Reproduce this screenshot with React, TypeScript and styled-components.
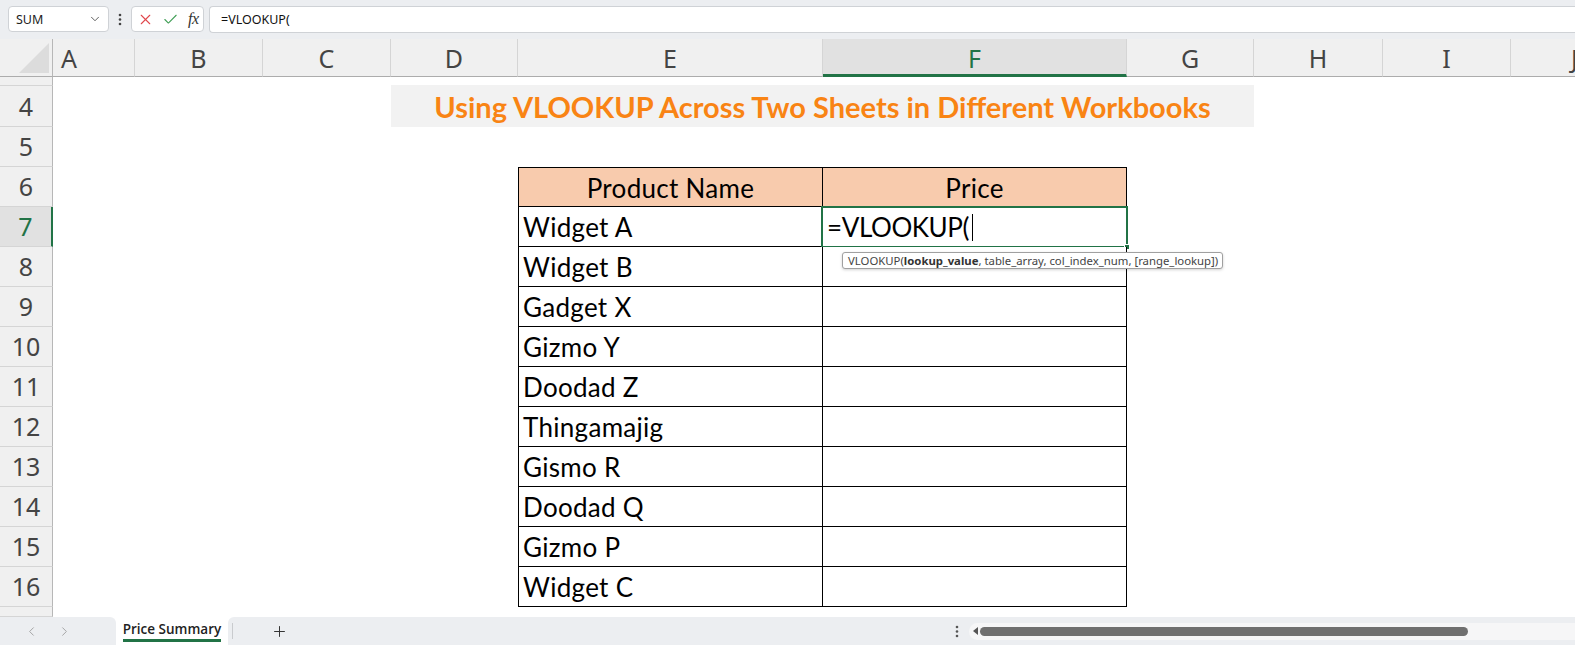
import React from "react";
import styled, { createGlobalStyle, css } from "styled-components";
import { X, Check, ChevronDown, ChevronLeft, ChevronRight, Plus } from "lucide-react";

const GlobalStyle = createGlobalStyle`
  html, body { margin: 0; padding: 0; background: #ffffff; overflow: hidden; }
  body { font-family: "Noto Sans", "Open Sans", sans-serif; }
  * { box-sizing: border-box; }
`;

const GREEN = "#217346";
const HEAD_BG = "#f0f0f0";
const HEAD_ACTIVE = "#e1e1e1";
const CELL_FONT = `"Lato", "Open Sans", sans-serif`;

const Frame = styled.div`
  width: 1575px;
  height: 645px;
  display: flex;
  flex-direction: column;
  overflow: hidden;
  background: #fff;
`;

/* ---------- Formula bar ---------- */
const TopBar = styled.div`
  flex: none;
  height: 39px;
  background: #eceef1;
  display: flex;
  align-items: flex-start;
  padding: 6px 0 0 8px;
`;

const NameBox = styled.div`
  width: 101px;
  height: 26px;
  background: #fff;
  border: 1px solid #cfd2d6;
  border-radius: 4px;
  display: flex;
  align-items: center;
  justify-content: space-between;
  padding: 0 6px 0 7px;
  font-size: 12.5px;
  color: #222;
`;

const VDots = styled.div`
  width: 22px;
  height: 26px;
  display: flex;
  align-items: center;
  justify-content: center;
`;

const IconBox = styled.div`
  width: 73px;
  height: 26px;
  background: #fff;
  border: 1px solid #cfd2d6;
  border-radius: 4px;
  display: flex;
  align-items: center;
  padding: 0 0 0 5px;
  gap: 8px;
`;

const Fx = styled.span`
  font-family: "Liberation Serif", "DejaVu Serif", serif;
  font-style: italic;
  font-size: 16px;
  color: #333;
  margin-left: 1px;
  letter-spacing: -0.5px;
`;

const FormulaInput = styled.div`
  flex: 1;
  margin-left: 5px;
  height: 27px;
  background: #fff;
  border: 1px solid #cfd2d6;
  border-right: none;
  border-radius: 4px 0 0 4px;
  display: flex;
  align-items: center;
  padding-left: 11px;
  font-size: 12.5px;
  color: #111;
`;

/* ---------- Sheet ---------- */
const Sheet = styled.div`
  flex: none;
  display: grid;
  grid-template-columns: 53px 82px 128px 128px 127px 305px 304px 127px 129px 128px 128px;
  grid-template-rows: 38px 9px 41px repeat(12, 40px) 10px;
  width: 1639px;
`;

type Pos = { $row: number; $col: number; $span?: number };

const placed = css<Pos>`
  grid-row: ${(p) => p.$row};
  grid-column: ${(p) => `${p.$col} / span ${p.$span ?? 1}`};
`;

const Corner = styled.div`
  grid-row: 1;
  grid-column: 1;
  background: ${HEAD_BG};
  border-right: 1px solid #b7b7b7;
  border-bottom: 1px solid #acacac;
  display: flex;
  align-items: flex-end;
  justify-content: flex-end;
  padding: 0 3px 3px 0;
`;

const ColHead = styled.div<Pos & { $active?: boolean; $left?: boolean }>`
  ${placed};
  background: ${(p) => (p.$active ? HEAD_ACTIVE : HEAD_BG)};
  border-right: 1px solid #d5d5d5;
  border-bottom: ${(p) => (p.$active ? `3px solid ${GREEN}` : "1px solid #acacac")};
  display: flex;
  align-items: center;
  justify-content: ${(p) => (p.$left ? "flex-start" : "center")};
  padding-left: ${(p) => (p.$left ? "8px" : "0")};
  padding-top: ${(p) => (p.$active ? "2px" : "0")};
  font-size: 25px;
  color: ${(p) => (p.$active ? GREEN : "#444")};
  overflow: hidden;
`;

const RowHead = styled.div<Pos & { $active?: boolean }>`
  ${placed};
  background: ${(p) => (p.$active ? HEAD_ACTIVE : HEAD_BG)};
  border-bottom: 1px solid #d5d5d5;
  border-right: ${(p) => (p.$active ? `2px solid ${GREEN}` : "1px solid #b7b7b7")};
  display: flex;
  align-items: center;
  justify-content: center;
  font-size: 25px;
  color: ${(p) => (p.$active ? GREEN : "#444")};
  overflow: hidden;
  line-height: 1;
`;

const TitleCell = styled.div<Pos>`
  ${placed};
  background: #f2f2f2;
  margin-top: -1px;
  display: flex;
  align-items: center;
  justify-content: center;
  font-family: ${CELL_FONT};
  font-weight: 700;
  font-size: 29px;
  color: #f98414;
  white-space: nowrap;
`;

const TCell = styled.div<Pos & { $head?: boolean; $first?: boolean; $top?: boolean }>`
  ${placed};
  position: relative;
  background: ${(p) => (p.$head ? "#f8cbad" : "#fff")};
  border-right: 1px solid #000;
  border-bottom: 1px solid #000;
  border-left: ${(p) => (p.$first ? "1px solid #000" : "none")};
  border-top: ${(p) => (p.$top ? "1px solid #000" : "none")};
  display: flex;
  align-items: center;
  justify-content: ${(p) => (p.$head ? "center" : "flex-start")};
  padding-left: ${(p) => (p.$head ? "0" : "4px")};
  padding-top: 1px;
  font-family: ${CELL_FONT};
  font-size: 26px;
  letter-spacing: 0.3px;
  color: #000;
  white-space: nowrap;
`;

const FormulaText = styled.span`
  letter-spacing: -0.4px;
`;

const ActiveFrame = styled.div`
  position: absolute;
  left: -2px;
  top: -1px;
  right: -2px;
  bottom: -2px;
  border: 2px solid ${GREEN};
  pointer-events: none;
`;

const FillHandle = styled.div`
  position: absolute;
  right: -4px;
  bottom: -4px;
  width: 6px;
  height: 6px;
  background: ${GREEN};
  border: 1px solid #fff;
`;

const Caret = styled.span`
  display: inline-block;
  width: 1px;
  height: 27px;
  background: #000;
  margin-left: 3px;
`;

const Tooltip = styled.div`
  position: absolute;
  left: 19px;
  top: 45px;
  height: 17px;
  padding: 0 4px 0 5px;
  background: #fff;
  border: 1px solid #a0a0a0;
  border-radius: 3px;
  box-shadow: 0 1px 3px rgba(0, 0, 0, 0.18);
  font-family: "Noto Sans", "Open Sans", sans-serif;
  font-size: 11.35px;
  letter-spacing: 0;
  line-height: 15px;
  color: #444;
  white-space: nowrap;
  z-index: 2;
  b { font-weight: 700; color: #333; }
`;

/* ---------- Tab bar ---------- */
const TabBar = styled.div`
  flex: none;
  height: 28px;
  display: flex;
  background: #fff;
`;

const NavArea = styled.div`
  width: 116px;
  background: #eceef1;
  border-top-right-radius: 6px;
  display: flex;
  align-items: center;
  padding-left: 24px;
  gap: 18px;
  color: #9a9a9a;
`;

const ActiveTab = styled.div`
  width: 112px;
  display: flex;
  flex-direction: column;
  align-items: center;
  padding-top: 3px;
`;

const TabLabel = styled.span`
  font-family: "Open Sans", "Noto Sans", sans-serif;
  font-weight: 600;
  font-size: 13.5px;
  color: #222;
  line-height: 18px;
  border-bottom: 3px solid ${GREEN};
  padding-bottom: 1px;
`;

const RestArea = styled.div`
  flex: 1;
  background: #eceef1;
  border-top-left-radius: 6px;
  display: flex;
  align-items: center;
`;

const Sep = styled.div`
  width: 1px;
  height: 16px;
  background: #c9cbce;
  margin-left: 4px;
`;

const AddBtn = styled.div`
  margin-left: 38px;
  display: flex;
  align-items: center;
  color: #333;
`;

const Spacer = styled.div`
  flex: 1;
`;

const ScrollDots = styled.div`
  width: 14px;
  display: flex;
  justify-content: center;
  margin-right: 5px;
`;

const Track = styled.div`
  width: 613px;
  height: 17px;
  margin-right: -7px;
  background: #f6f6f7;
  border-radius: 9px;
  display: flex;
  align-items: center;
  padding-left: 4px;
  gap: 2px;
`;

const Thumb = styled.div`
  width: 488px;
  height: 9px;
  border-radius: 5px;
  background: #6f6f6f;
`;

const TrackFill = styled.div`
  flex: 1;
`;

const DotsIcon = ({ color = "#444" }: { color?: string }) => (
  <svg width="4" height="13" viewBox="0 0 4 13">
    <circle cx="2" cy="2" r="1.3" fill={color} />
    <circle cx="2" cy="6.5" r="1.3" fill={color} />
    <circle cx="2" cy="11" r="1.3" fill={color} />
  </svg>
);

const Tri = ({ dir }: { dir: "l" | "r" }) => (
  <svg width="5" height="8" viewBox="0 0 5 8">
    {dir === "l" ? <path d="M5 0 L0 4 L5 8 Z" fill="#555" /> : <path d="M0 0 L5 4 L0 8 Z" fill="#555" />}
  </svg>
);

const COLS = ["A", "B", "C", "D", "E", "F", "G", "H", "I", "J"];
const ROWS = [3, 4, 5, 6, 7, 8, 9, 10, 11, 12, 13, 14, 15, 16, 17];
const PRODUCTS = [
  "Widget A",
  "Widget B",
  "Gadget X",
  "Gizmo Y",
  "Doodad Z",
  "Thingamajig",
  "Gismo R",
  "Doodad Q",
  "Gizmo P",
  "Widget C",
];

const gr = (r: number) => r - 1; // sheet row -> grid row

export default function App() {
  return (
    <>
      <GlobalStyle />
      <Frame>
        <TopBar>
          <NameBox>
            <span>SUM</span>
            <ChevronDown size={14} strokeWidth={1.6} color="#555" />
          </NameBox>
          <VDots>
            <DotsIcon />
          </VDots>
          <IconBox>
            <X size={17} strokeWidth={1.5} color="#e0474c" />
            <Check size={17} strokeWidth={1.5} color="#3f9e55" />
            <Fx>fx</Fx>
          </IconBox>
          <FormulaInput>=VLOOKUP(</FormulaInput>
        </TopBar>

        <Sheet>
          <Corner>
            <svg width="30" height="30" viewBox="0 0 30 30">
              <path d="M30 0 L30 30 L0 30 Z" fill="#dcdcdc" />
            </svg>
          </Corner>
          {COLS.map((c, i) => (
            <ColHead key={c} $row={1} $col={i + 2} $active={c === "F"} $left={c === "A"}>
              {c}
            </ColHead>
          ))}
          {ROWS.map((r) => (
            <RowHead key={r} $row={gr(r)} $col={1} $active={r === 7}>
              {r >= 4 && r <= 16 ? r : ""}
            </RowHead>
          ))}

          <TitleCell $row={gr(4)} $col={5} $span={4}>
            Using VLOOKUP Across Two Sheets in Different Workbooks
          </TitleCell>

          <TCell $row={gr(6)} $col={6} $head $first $top>
            Product Name
          </TCell>
          <TCell $row={gr(6)} $col={7} $head $top>
            Price
          </TCell>

          {PRODUCTS.map((p, i) => (
            <React.Fragment key={p}>
              <TCell $row={gr(7 + i)} $col={6} $first>
                {p}
              </TCell>
              {i === 0 ? (
                <TCell $row={gr(7)} $col={7}>
                  <FormulaText>=VLOOKUP(</FormulaText>
                  <Caret />
                  <ActiveFrame>
                    <FillHandle />
                  </ActiveFrame>
                  <Tooltip>
                    VLOOKUP(<b>lookup_value</b>, table_array, col_index_num, [range_lookup])
                  </Tooltip>
                </TCell>
              ) : (
                <TCell $row={gr(7 + i)} $col={7} />
              )}
            </React.Fragment>
          ))}
        </Sheet>

        <TabBar>
          <NavArea>
            <ChevronLeft size={15} strokeWidth={1.4} />
            <ChevronRight size={15} strokeWidth={1.4} />
          </NavArea>
          <ActiveTab>
            <TabLabel>Price Summary</TabLabel>
          </ActiveTab>
          <RestArea>
            <Sep />
            <AddBtn>
              <Plus size={17} strokeWidth={1.4} />
            </AddBtn>
            <Spacer />
            <ScrollDots>
              <DotsIcon color="#555" />
            </ScrollDots>
            <Track>
              <Tri dir="l" />
              <Thumb />
              <TrackFill />
              <Tri dir="r" />
            </Track>
          </RestArea>
        </TabBar>
      </Frame>
    </>
  );
}
